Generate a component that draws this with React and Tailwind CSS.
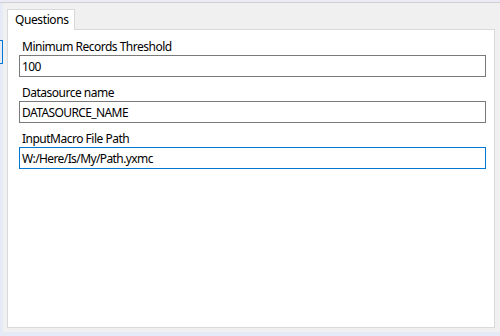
import React from 'react';

const fields = [
  { label: 'Minimum Records Threshold', value: '100' },
  { label: 'Datasource name', value: 'DATASOURCE_NAME' },
  { label: 'InputMacro File Path', value: 'W:/Here/Is/My/Path.yxmc', focused: true },
];

const Field = ({ label, value, focused }) => (
  <div className="flex flex-col">
    <label className="h-[16px] leading-[18px] pl-[3px] mb-px text-[12px] tracking-[-0.5px] text-black">{label}</label>
    <input
      readOnly
      value={value}
      className={
        'h-[22px] w-full border bg-white px-[2px] text-[12px] tracking-[-0.6px] text-black outline-none ' +
        (focused ? 'border-[#0078d7]' : 'border-[#7a7a7a]')
      }
    />
  </div>
);

export default function App() {
  return (
    <div
      className="relative flex h-[336px] w-[500px] flex-col overflow-hidden bg-[#f0f0f0]"
      style={{ fontFamily: '"Noto Sans", "Open Sans", sans-serif' }}
    >
      <div className="h-[2px] bg-[#ebebf7]" />
      <div className="h-px bg-[#d0d0d0]" />
      <div className="flex flex-1">
        <div className="w-[3px] bg-[#e6eaf6]" />
        <div className="flex flex-1 flex-col pl-[4px] pr-[5px] pt-[6px] pb-[4px]">
          <div className="relative z-10 -mb-px flex">
            <div className="h-[21px] w-[68px] border border-b-0 border-[#d9d9d9] bg-white pl-[7px] text-[12px] tracking-[-0.4px] leading-[20px] text-black">
              Questions
            </div>
          </div>
          <div className="flex flex-1 flex-col gap-[7px] border border-[#d9d9d9] bg-white pl-[11px] pr-[8px] pt-[8px]">
            {fields.map((f) => (
              <Field key={f.label} {...f} />
            ))}
          </div>
        </div>
      </div>
      <div className="h-[4px] bg-[#e6eaf6]" />
      <div className="absolute left-0 top-[40px] h-[24px] w-[3px] border-y border-r border-[#0078d7]" />
    </div>
  );
}
